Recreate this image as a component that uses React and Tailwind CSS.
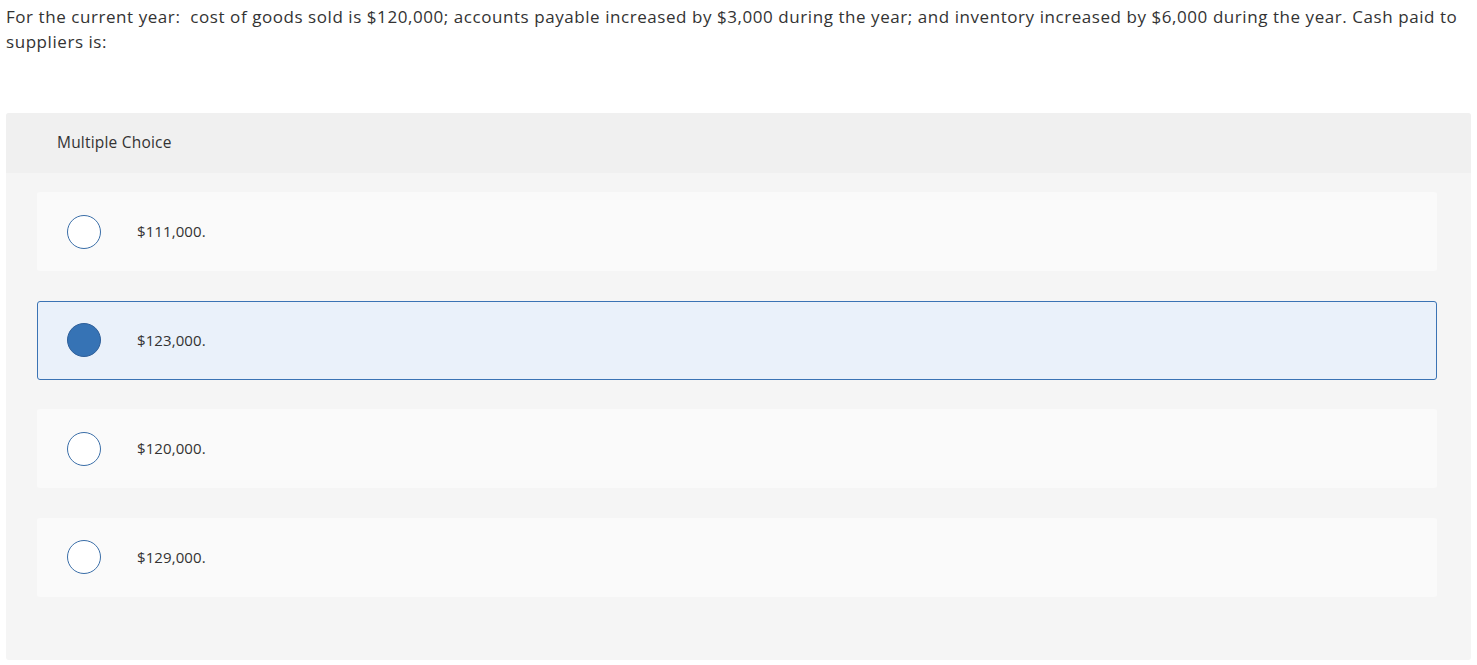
import React, { useState } from "react";

const choices = ["$111,000.", "$123,000.", "$120,000.", "$129,000."];

export default function App() {
  const [selected, setSelected] = useState(1);

  return (
    <div className="min-h-screen bg-white text-[#333] font-['Open_Sans',sans-serif]">
      {/* Question */}
      <p className="pl-[6px] pr-[8px] pt-[4px] text-[17px] leading-[25px] tracking-[0.56px]">
        For the current year:&nbsp; cost of goods sold is $120,000; accounts payable increased by $3,000 during the year; and inventory increased by $6,000 during the year. Cash paid to suppliers is:
      </p>

      {/* Answer panel */}
      <div className="ml-[6px] mr-[6px] mt-[59px] h-[547px] rounded-[3px] bg-[#f5f5f5] overflow-hidden">
        <div className="h-[60px] flex items-center pl-[51px] bg-[#f0f0f0] text-[15.5px] tracking-[0.2px]">
          Multiple Choice
        </div>

        <div className="pt-[19px] pl-[31px] pr-[34px] flex flex-col gap-[29.5px]">
          {choices.map((c, i) => {
            const on = selected === i;
            return (
              <button
                key={c}
                onClick={() => setSelected(i)}
                className={
                  on
                    ? "h-[79px] flex items-center rounded-[3px] border border-[#3b73b4] bg-[#eaf1fa] pl-[29px] text-left"
                    : "h-[79px] flex items-center rounded-[3px] border border-transparent bg-[#fafafa] pl-[29px] text-left"
                }
              >
                <span
                  className={
                    on
                      ? "w-[34px] h-[34px] rounded-full border border-[#2f5f99] bg-[#3673b5] shrink-0"
                      : "w-[34px] h-[34px] rounded-full border border-[#3a6ea8] bg-white shrink-0"
                  }
                />
                <span className="ml-[36px] text-[15px] tracking-[0.1px]">{c}</span>
              </button>
            );
          })}
        </div>
      </div>
    </div>
  );
}
